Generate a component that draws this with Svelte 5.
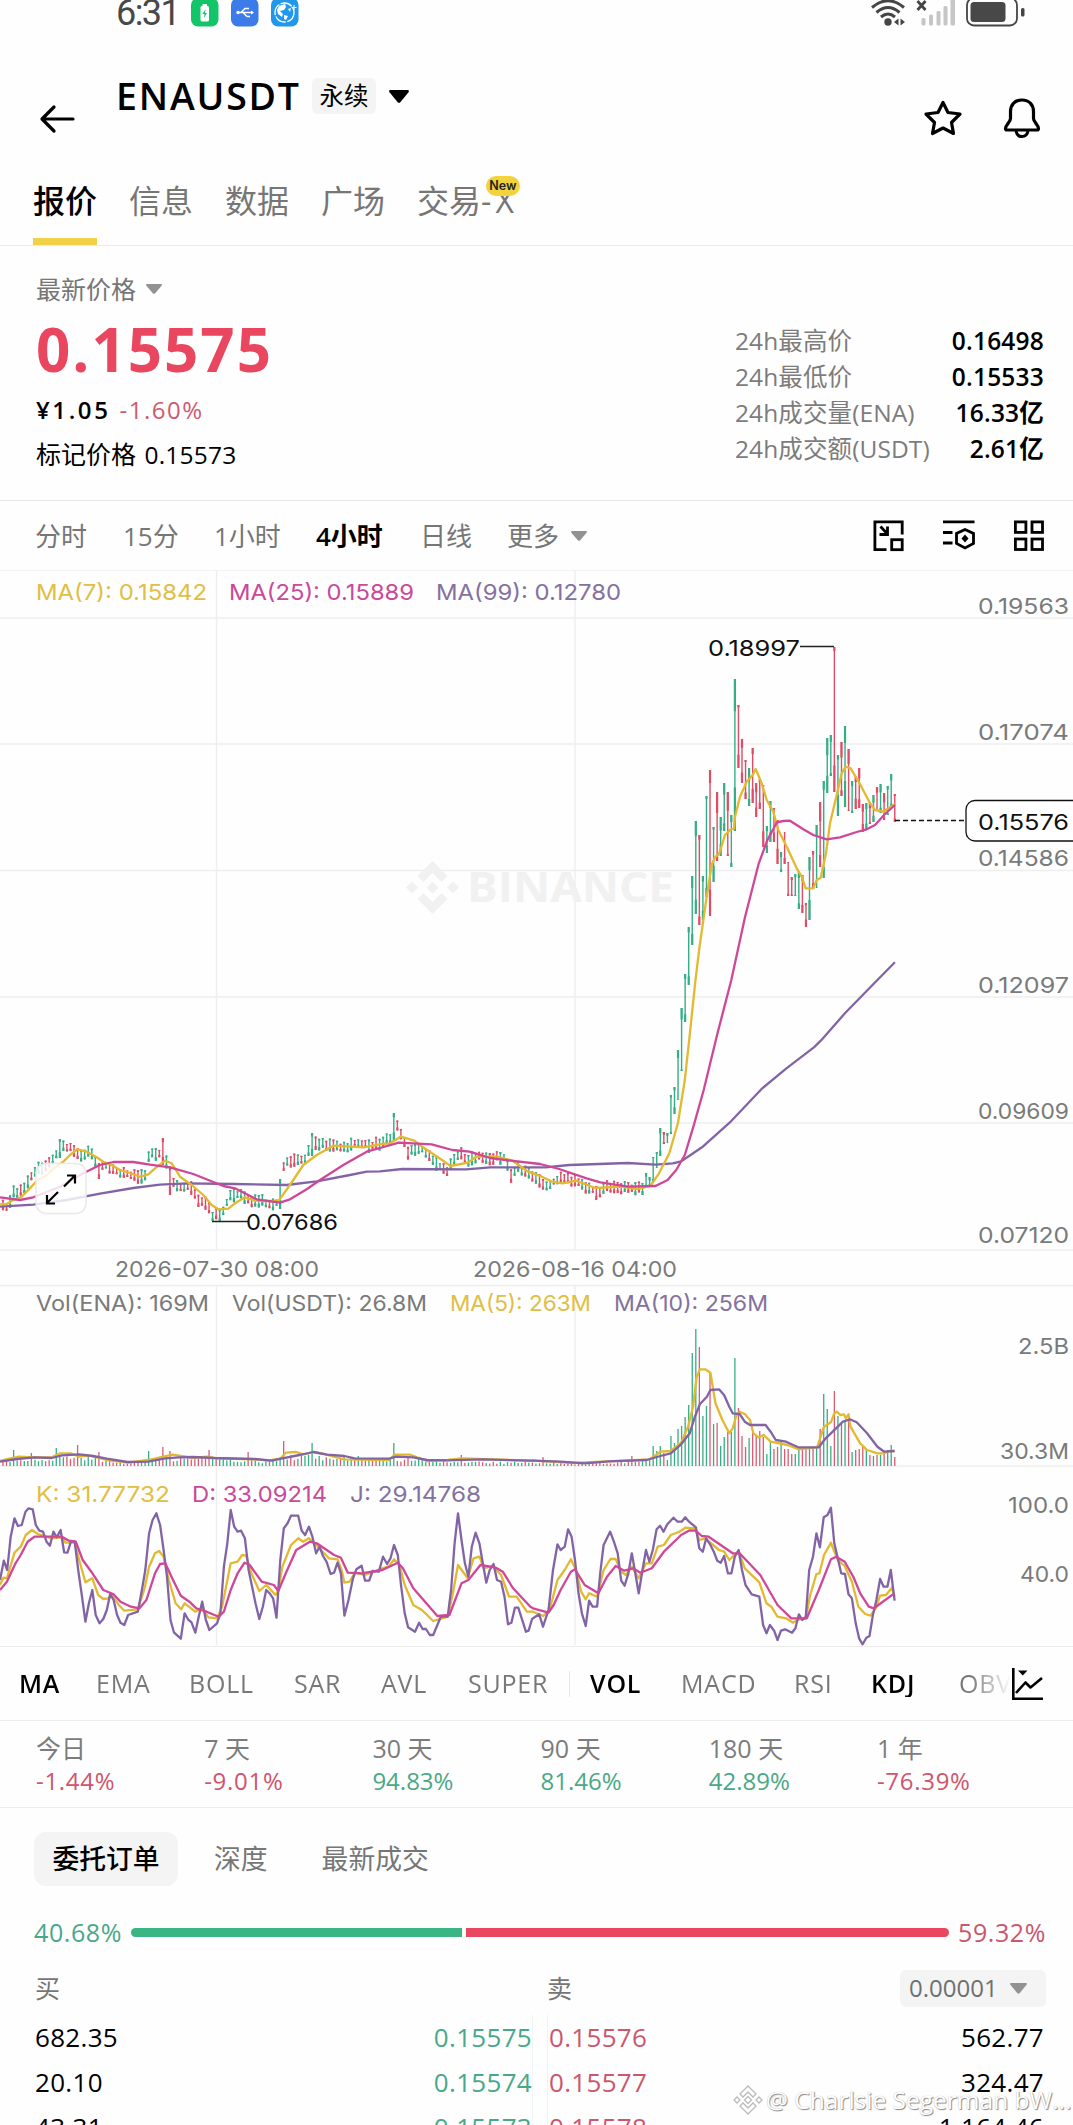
<script lang="ts">
    type Candle = { x: number; high: number; low: number; open: number; close: number; up: boolean };

    const STEP = 3.553;
    const FIRST_X = 688.7;
    const VOL_BASE = 1466;

    const tabs = ["报价", "信息", "数据", "广场"];

    const stats = [
        { label: "24h最高价", value: "0.16498" },
        { label: "24h最低价", value: "0.15533" },
        { label: "24h成交量(ENA)", value: "16.33亿" },
        { label: "24h成交额(USDT)", value: "2.61亿" },
    ];

    const periods = [
        { label: "分时", width: 88 },
        { label: "15分", width: 91 },
        { label: "1小时", width: 102 },
        { label: "4小时", width: 104, active: true },
        { label: "日线", width: 87 },
        { label: "更多", width: 64 },
    ];

    const indicators = [
        { label: "MA", width: 77, active: true },
        { label: "EMA", width: 93 },
        { label: "BOLL", width: 105 },
        { label: "SAR", width: 87 },
        { label: "AVL", width: 87 },
        { label: "SUPER", width: 101 },
        { label: "VOL", width: 91, active: true },
        { label: "MACD", width: 113 },
        { label: "RSI", width: 77 },
        { label: "KDJ", width: 88, active: true },
        { label: "OBV", width: 50 },
    ];

    const performance = [
        { label: "今日", value: "-1.44%" },
        { label: "7 天", value: "-9.01%" },
        { label: "30 天", value: "94.83%" },
        { label: "90 天", value: "81.46%" },
        { label: "180 天", value: "42.89%" },
        { label: "1 年", value: "-76.39%" },
    ];

    const book = [
        { bidQty: "682.35", bid: "0.15575", ask: "0.15576", askQty: "562.77" },
        { bidQty: "20.10", bid: "0.15574", ask: "0.15577", askQty: "324.47" },
        { bidQty: "43.31", bid: "0.15573", ask: "0.15578", askQty: "1,164.46" },
    ];
    const buyShare = 40.68;

    const gridRows = [618, 744, 870.5, 997, 1123, 1250];
    const gridCols = [216.5, 575];

    const axis = [
        { text: "0.19563", y: 614, w: 91 },
        { text: "0.17074", y: 740, w: 91 },
        { text: "0.14586", y: 866, w: 91 },
        { text: "0.12097", y: 993, w: 91 },
        { text: "0.09609", y: 1119, w: 91 },
        { text: "0.07120", y: 1243, w: 91 },
        { text: "2.5B", y: 1354, w: 51 },
        { text: "30.3M", y: 1459, w: 69 },
        { text: "100.0", y: 1513, w: 61 },
        { text: "40.0", y: 1582, w: 49 },
    ];

    const legend = [
        { text: "MA(7): 0.15842", x: 36, y: 600, w: 171, c: "yellow" },
        { text: "MA(25): 0.15889", x: 229, y: 600, w: 185, c: "pink" },
        { text: "MA(99): 0.12780", x: 436, y: 600, w: 185, c: "purple" },
        { text: "Vol(ENA): 169M", x: 36, y: 1311, w: 173, c: "gray" },
        { text: "Vol(USDT): 26.8M", x: 232, y: 1311, w: 195, c: "gray" },
        { text: "MA(5): 263M", x: 450, y: 1311, w: 141, c: "yellow" },
        { text: "MA(10): 256M", x: 614, y: 1311, w: 154, c: "purple" },
        { text: "K: 31.77732", x: 36, y: 1502, w: 134, c: "yellow" },
        { text: "D: 33.09214", x: 192, y: 1502, w: 135, c: "pink" },
        { text: "J: 29.14768", x: 350, y: 1502, w: 131, c: "purple" },
    ];

    // high, low and direction of the latest bars, oldest first
    const recent = `1183 1195 u,1173 1186 u,1177 1187 u,1157 1182 u,1152 1168 u,1128 1156 u,1132 1144 d,1133 1143 u,
        1095 1134 u,1087 1114 u,1050 1100 u,1008 1071 u,974 1022 u,927 985 u,876 945 u,821 914 u,835 925 d,876 920 u,
        796 897 u,770 916 d,827 882 u,792 861 d,817 856 u,783 831 u,792 856 d,815 867 u,679 831 u,705 768 d,739 783 d,
        760 799 d,768 806 u,748 803 d,783 817 d,779 809 d,785 847 d,826 853 u,801 842 u,808 842 d,820 864 d,852 872 u,
        832 864 d,862 896 d,877 896 d,874 896 u,872 909 u,875 913 d,903 927 d,857 920 u,851 889 d,825 888 u,802 867 d,
        781 878 u,738 793 u,735 776 u,647 792 d,755 816 u,742 796 d,726 807 u,749 811 d,781 813 u,776 809 d,768 808 d,
        804 832 d,803 830 u,803 824 d,795 822 u,787 811 d,784 813 u,793 820 d,786 815 u,774 807 u,794 822 d`
        .split(",")
        .map((row) => row.trim().split(" "));

    // midline of the quiet stretch before the rally
    const drift = [
        0, 1205, 8, 1208, 14, 1192, 22, 1191, 30, 1178, 37, 1170, 50, 1163, 60, 1150, 64, 1147, 72, 1148, 80, 1156,
        90, 1152, 100, 1167, 105, 1165, 115, 1171, 130, 1174, 140, 1178, 146, 1172, 149, 1154, 160, 1153, 166, 1160,
        171, 1180, 180, 1187, 190, 1186, 197, 1200, 205, 1203, 213, 1213, 218, 1216, 225, 1208, 229, 1196, 240, 1195,
        250, 1200, 262, 1201, 274, 1206, 279, 1200, 283, 1166, 290, 1161, 305, 1160, 312, 1144, 325, 1143, 335, 1147,
        345, 1147, 355, 1143, 370, 1146, 380, 1143, 392, 1138, 397, 1127, 404, 1140, 408, 1152, 420, 1147, 435, 1163,
        447, 1170, 454, 1158, 460, 1153, 468, 1162, 475, 1156, 490, 1158, 505, 1157, 511, 1176, 516, 1168, 530, 1174,
        547, 1186, 560, 1177, 580, 1183, 596, 1192, 610, 1186, 625, 1188, 645, 1189,
    ];

    const spikes: Record<number, [number, number, boolean]> = {
        163: [1138, 1165, false],
        170: [1166, 1195, false],
        394: [1113, 1141, true],
        213: [1212, 1221, true],
        280: [1179, 1209, true],
        60: [1139, 1158, true],
        312: [1133, 1156, true],
        99: [1163, 1179, false],
        596: [1186, 1200, false],
    };

    function noise(i: number) {
        const v = Math.sin(i * 127.1 + 11.7) * 43758.5453;
        return v - Math.floor(v);
    }

    function level(path: number[], x: number) {
        for (let i = 2; i < path.length; i += 2) {
            if (x <= path[i]) {
                const t = (x - path[i - 2]) / (path[i] - path[i - 2]);
                return path[i - 1] + t * (path[i + 1] - path[i - 1]);
            }
        }
        return path[path.length - 1];
    }

    function buildCandles(): Candle[] {
        const list: Candle[] = [];
        for (let n = -193; n < -13; n++) {
            const x = FIRST_X + n * STEP;
            const mid = level(drift, x);
            const slope = level(drift, x + 4) - level(drift, x - 4);
            const up = slope < -2 ? noise(n) < 0.8 : slope > 2 ? noise(n) < 0.25 : noise(n) < 0.5;
            let high = mid - 2.5 - noise(n + 500) * 5;
            let low = mid + 2.5 + noise(n + 900) * 5;
            let dir = up;
            for (const key in spikes) {
                if (Math.abs(Number(key) - x) < STEP / 2) [high, low, dir] = spikes[key];
            }
            const a = high + (low - high) * 0.15;
            const b = low - (low - high) * 0.3;
            list.push({ x, high, low, open: a, close: b, up: dir });
        }
        recent.forEach(([h, l, d], i) => {
            const high = Number(h);
            const low = Number(l);
            const n = i - 13;
            const top = high + (low - high) * noise(n + 40) * 0.35;
            const bottom = low - (low - high) * noise(n + 70) * 0.35;
            list.push({ x: FIRST_X + n * STEP, high, low, open: top, close: bottom, up: d === "u" });
        });
        return list;
    }

    const candles = buildCandles();

    const recentVolume = [
        20, 15, 20, 13, 6, 30, 23, 37, 40, 49, 61, 113, 137, 119, 50, 60, 94, 42, 43, 20, 29, 34, 34, 108, 58, 30, 19,
        28, 33, 30, 35, 29, 12, 24, 17, 19, 24, 17, 17, 12, 12, 16, 18, 17, 17, 18, 19, 37, 72, 57, 20, 75, 50, 43, 46,
        47, 14, 16, 17, 19, 17, 11, 10, 11, 11, 12, 16, 21, 9,
    ];
    const volumeSpikes: Record<number, number> = {
        14: 16, 32: 13, 57: 18, 78: 21, 99: 14, 149: 15, 163: 19, 170: 15, 209: 16, 249: 14,
        284: 25, 313: 23, 394: 23, 461: 11, 543: 9, 632: 10,
    };
    const volumeTrend = [0, 5, 60, 8, 90, 8, 130, 3, 160, 7, 220, 7, 260, 4, 300, 10, 330, 9, 420, 6, 450, 4, 560, 3, 590, 2, 620, 4, 650, 6];

    const volumes = candles.map((c, i) => {
        const late = i - (candles.length - recentVolume.length);
        let h = late >= 0 ? recentVolume[late] : level(volumeTrend, c.x) * (0.6 + noise(i + 33) * 0.7);
        if (late < 0) {
            for (const key in volumeSpikes) {
                if (Math.abs(Number(key) - c.x) < STEP / 2) h = volumeSpikes[key];
            }
        }
        return { x: c.x, h, up: c.up };
    });

    // Turns "x,y x,y" sampled on a fine grid into page units
    function trace(src: string, ox: number, oy: number, sx: number) {
        return src
            .trim()
            .split(/\s+/)
            .map((p) => {
                const [x, y] = p.split(",").map(Number);
                return `${(x / sx + ox).toFixed(1)},${(y / 3 + oy).toFixed(1)}`;
            })
            .join(" ");
    }

    const FINE = 2.9037;

    const ma7 = [
        trace("0,373 20,372 40,360 65,350 90,325 110,303 140,285 165,262 190,245 210,225 232,208 260,215 290,232 310,245 335,255 360,270 400,282 420,290 445,283 465,265 495,242 515,250 540,290 575,315 610,345 635,375 655,388 685,386 705,370 735,352 765,362 800,363 835,363 845,350 880,300 910,255 950,225 1000,197 1050,200 1090,202 1130,195", 0, 1080, 3),
        trace("0,972 30,970 60,950 100,962 125,982 180,1020 205,1038 255,1028 280,1010 340,1010 385,1022 430,1055 470,1070 500,1085 530,1090 570,1082 625,1104 700,1100 750,1107 785,1098 810,1060 840,1000 865,910 885,780 900,640 915,490", 380, 820, FINE),
        trace("178,985 200,830 215,735 225,712 238,700 255,645 270,630 282,625 285,590 300,530 320,485 338,465 347,447 365,490 380,540 400,575 415,630 440,680 470,745 485,770 497,805 520,805 530,780 542,773 558,700 570,610 590,525 605,460 617,440 632,445 660,492 690,550 705,570 730,575 750,562 765,552", 640, 620, 3),
    ].join(" ");

    const ma25 = [
        trace("0,352 60,360 100,352 180,320 250,280 300,255 340,246 400,246 450,254 510,262 580,282 640,306 670,318 705,325 770,358 840,368 870,358 920,328 960,300 1030,255 1100,215", 0, 1080, 3),
        trace("0,984 55,968 150,973 210,990 260,995 320,1014 380,1022 465,1032 520,1047 600,1075 640,1087 720,1100 800,1098 835,1080 860,1050 885,1005 910,920 940,810 980,640 1020,480 1060,290 1100,130 1125,60 1150,12", 380, 820, FINE),
        trace("410,607 430,603 450,602 490,628 520,645 560,658 600,652 650,636 680,628 705,615 735,582 765,555", 640, 620, 3),
    ].join(" ");

    const ma99 = [
        trace("0,380 100,374 200,360 300,341 400,324 480,314 560,310 700,312 860,315 950,304 1050,285 1100,275", 0, 1080, 3),
        trace("0,1054 65,1047 250,1048 320,1042 480,1042 550,1035 720,1029 800,1034 850,1030 875,1024 935,982 1015,908 1110,805 1180,745 1260,682 1280,662 1350,580 1430,495 1495,427", 380, 820, FINE),
    ].join(" ");

    const vol5 = [
        trace("0,603 30,595 55,590 100,592 150,592 175,580 205,580 230,590 260,587 310,600 370,608 430,600 500,584 540,590 560,594 600,590 640,596 740,598 780,602 815,595 830,578 860,576 880,583 910,576 940,582 1000,598 1130,600 1145,584 1190,584 1240,603 1300,600 1340,595 1540,602", 0, 1260, FINE),
        trace("0,602 120,609 200,605 340,598 370,575 400,573 430,548 450,500 465,440 475,350 485,328 500,328 515,338 530,430 550,480 570,520 580,505 590,468 600,455 615,462 630,480 640,520 655,532 670,525 690,545 740,555 770,568 825,562 845,500 865,487 875,460 882,455 892,465 903,463 908,475 916,463 922,500 950,550 970,570 1000,580 1020,580 1035,573 1050,573", 533, 1260, FINE),
    ].join(" ");

    const vol10 = [
        trace("0,605 50,597 100,592 150,594 180,586 230,583 270,588 310,596 370,606 430,605 480,595 520,592 560,591 620,594 740,597 790,602 820,595 870,585 910,576 950,584 1000,588 1030,595 1130,596 1150,590 1200,592 1240,600 1300,601 1400,598 1540,602", 0, 1260, FINE),
        trace("0,602 80,605 150,610 220,604 330,600 370,588 400,580 430,553 455,520 470,470 485,432 505,410 515,390 540,388 555,405 570,440 580,460 600,462 615,485 630,495 675,495 690,515 705,540 735,545 770,562 830,562 850,535 865,520 900,485 920,478 940,487 970,520 1000,560 1020,575 1050,573", 533, 1260, FINE),
    ].join(" ");

    const lineJ = [
        trace("0,960 11,902 21,930 31,830 42,775 52,798 63,795 74,755 83,745 95,748 104,795 114,812 125,815 135,845 145,857 155,815 165,832 176,810 186,877 196,878 206,845 217,845 227,930 238,1010 248,1085 258,1030 268,990 278,1065 289,1090 300,1077 310,1050 320,1002 330,1020 340,1065 350,1088 361,1095 372,1065 400,1055 412,990 422,930 433,820 443,780 454,760 465,795 475,870 485,950 495,1080 505,1117 525,1136 536,1060 546,1078 556,1087 567,1118 577,1070 587,1025 598,1080 608,1110 630,1090 640,1060 650,920 660,850 670,750 680,800 690,815 700,812 711,835 722,930 732,980 742,1030 753,1077 763,1040 773,990 783,1000 793,1015 803,1073 814,900 824,805 835,790 845,767 866,767 876,812 886,825 897,800 907,830 918,880 928,860 938,888 948,905 960,942 970,938 980,908 990,940 1000,1067 1012,1020 1025,955 1035,928 1050,917 1060,962 1072,962 1082,933 1100,935 1112,890 1124,912 1134,895 1144,855 1155,885 1165,980 1175,1060 1185,1102 1205,1115 1217,1088 1227,1107 1237,1107 1248,1125 1258,1125 1270,1095 1280,1070 1300,1070 1310,990 1320,850 1330,760 1340,840 1350,910 1360,950 1370,860 1381,818 1392,850 1402,910 1412,968 1422,930 1433,912 1443,960 1455,965 1465,1010 1475,1093 1485,1088 1495,1043 1505,1043 1515,1075 1527,1115 1535,1112 1545,1077", 0, 1260, FINE),
        trace("0,1075 18,1063 29,1100 45,1050 58,930 71,853 80,870 92,860 102,808 112,830 122,900 132,1000 142,1060 153,1098 163,1022 173,1040 186,1040 195,940 205,855 224,815 235,845 246,880 256,962 266,977 277,940 287,880 297,940 307,1000 318,930 328,870 338,905 348,870 359,808 369,797 379,815 390,793 408,773 420,785 432,785 442,772 453,785 473,802 483,865 493,875 503,835 515,855 525,875 535,902 545,908 555,888 566,940 576,940 586,890 597,870 607,930 617,975 635,1003 657,1010 668,1095 678,1120 688,1095 700,1112 710,1140 720,1112 732,1108 752,1118 762,1105 772,1063 782,1080 792,1070 802,930 813,890 823,820 833,862 844,772 855,765 865,743 875,850 885,895 895,940 906,942 916,1003 926,1015 937,1090 947,1135 957,1153 968,1133 977,1128 987,1065 997,1020 1008,957 1018,980 1029,980 1039,930 1050,1022", 533, 1260, FINE),
    ].join(" ");

    const lineK = [
        trace("0,975 10,953 20,955 42,878 60,860 75,825 93,810 110,822 150,835 180,832 190,848 217,848 230,900 248,967 268,955 285,1005 300,1017 315,1015 325,1003 345,1035 361,1052 400,1048 420,985 433,920 450,880 462,873 475,890 490,960 510,1030 526,1048 536,1030 567,1055 587,1045 605,1072 630,1075 645,1040 670,910 690,905 703,885 715,887 730,940 753,993 773,975 800,1005 808,990 820,920 845,855 866,835 880,845 897,835 918,855 955,895 980,898 992,930 1000,968 1015,965 1030,938 1060,945 1110,925 1130,918 1144,898 1160,915 1175,975 1200,1035 1225,1050 1258,1083 1300,1070 1315,1000 1330,915 1358,955 1375,895 1392,890 1405,925 1430,918 1455,945 1478,1010 1500,1010 1530,1055", 0, 1260, FINE),
        trace("0,1055 30,1068 48,1050 71,960 92,930 110,898 125,930 140,995 153,1018 163,1000 186,1010 205,930 225,897 240,897 256,935 270,945 287,920 307,955 328,910 345,910 362,860 380,855 400,825 425,815 442,803 470,805 483,840 500,835 540,870 555,875 570,900 580,890 597,873 615,925 657,967 678,1030 692,1040 710,1070 735,1075 755,1088 772,1078 792,1075 805,1005 823,942 832,940 845,885 865,848 885,900 905,918 926,965 945,1040 965,1062 980,1067 995,1045 1008,1007 1025,1005 1042,983 1050,1010", 533, 1260, FINE),
    ].join(" ");

    const lineD = [
        trace("0,990 20,965 45,910 60,885 80,845 100,830 180,830 200,842 220,845 240,900 265,935 300,990 330,1003 350,1025 380,1040 405,1045 425,1020 450,940 465,912 480,910 500,955 525,1007 550,1025 570,1045 600,1055 635,1070 650,1055 670,990 690,940 710,908 725,915 760,965 795,975 808,993 830,940 860,870 900,845 920,850 970,885 990,893 1010,938 1050,940 1110,930 1155,908 1170,925 1200,985 1270,1068 1305,1065 1340,970 1360,960 1395,915 1440,923 1460,935 1490,985 1540,1040", 0, 1260, FINE),
        trace("0,1045 45,1058 60,1035 80,990 110,935 122,928 150,975 190,1000 215,950 240,918 265,932 290,925 312,938 345,925 380,875 430,825 455,811 472,812 490,828 510,830 545,855 580,880 600,880 660,945 710,1035 750,1075 795,1075 830,990 865,898 880,890 905,905 930,950 950,1000 975,1040 990,1045 1010,1030 1045,1003 1050,1003", 533, 1260, FINE),
    ].join(" ");
</script>

{#snippet caret(w: number, h: number, color: string)}
    <svg class="caret" width={w} height={h} viewBox="0 0 20 12" preserveAspectRatio="none">
        <path d="M1 0h18q1.5.5.5 2L11.5 11q-1.5 1.6-3 0L.5 2Q-.5.5 1 0z" fill={color} />
    </svg>
{/snippet}

<main class="page">
    <div class="status">
        <span class="clock">6:31</span>
        <svg class="apps" width="108" height="27" viewBox="0 0 108 27">
            <rect x="0" y="-2" width="27.5" height="28.5" rx="7" fill="#12c568" />
            <rect x="9.5" y="6" width="8.5" height="15.5" rx="1.5" fill="#fff" />
            <rect x="11.5" y="4" width="4.5" height="2" fill="#fff" />
            <path d="M14.5 9l-3 5h2l-.5 4 3-5h-2z" fill="#12c568" />
            <rect x="40" y="-2" width="27.5" height="28.5" rx="7" fill="#3c7ce9" />
            <g stroke="#fff" stroke-width="1.4" fill="none">
                <path d="M47 12.500h15M50 12.500l4-4h4M52 12.500l4 4h3" />
                <circle cx="47" cy="12.500" r="1" fill="#fff" />
                <path d="M60 10.500l3 2-3 2z" fill="#fff" stroke="none" />
            </g>
            <rect x="80" y="-2" width="27.500" height="28.500" rx="7" fill="#2198ec" />
            <circle cx="93.500" cy="12.500" r="9.500" fill="none" stroke="#fff" stroke-width="1.3" stroke-dasharray="12 1.500" />
            <path d="M88 6l6-2 1 3-2 3-4 1 3 3-1 3-4-3-1-4zM93 15l4 1-2 4-2-1zM97 9l2 3 1-4z" fill="#fff" />
            <path d="M103 5v5M100.500 7.500h5" stroke="#fff" />
        </svg>
        <svg class="signals" width="156" height="28" viewBox="0 0 156 28">
            <g fill="none" stroke="#454545" stroke-width="3">
                <path d="M2 7.500Q18-6 34 7.500M6.500 12.500Q18 2.500 29.500 12.500M11 17Q18 11 25 17" />
            </g>
            <circle cx="18" cy="22" r="3.700" fill="#454545" />
            <path d="M28.500 18.500v7l-4.500-3.500zM30.500 18.500v7l4.500-3.500z" fill="#454545" />
            <path d="M47.500 1l8 9M55.500 1l-8 9" stroke="#454545" stroke-width="2.800" />
            <g fill="#c6c6c6">
                <rect x="51.500" y="18" width="4" height="7.500" rx="1.500" />
                <rect x="59" y="14.500" width="4" height="11" rx="1.500" />
                <rect x="66.500" y="11" width="4" height="14.500" rx="1.500" />
                <rect x="73.500" y="6" width="4" height="19.500" rx="1.500" />
                <rect x="80.500" y="-2" width="4.500" height="27.500" rx="1.500" />
            </g>
            <rect x="97" y="-2" width="50" height="27.500" rx="7" fill="none" stroke="#454545" stroke-width="1.800" />
            <rect x="100.500" y="2" width="35" height="20" rx="3.500" fill="#484848" />
            <rect x="151" y="8" width="3.500" height="8.500" rx="1.500" fill="#454545" />
        </svg>
    </div>

    <header class="header">
        <svg class="back" width="36" height="30" viewBox="0 0 36 30">
            <path d="M15 3L3 15l12 12M3.500 15H34" fill="none" stroke="#000" stroke-width="3.200" stroke-linecap="round" stroke-linejoin="round" />
        </svg>
        <div class="symbol">
            <h1>ENAUSDT</h1>
            <span class="tag">永续</span>
            {@render caret(20, 13, "#000")}
        </div>
        <svg class="star" width="40" height="40" viewBox="0 0 40 40">
            <path d="M20 4.500L25 14.500L37 16L28.500 24.500L30.500 35.500L20 30L9.500 35.500L11.500 24.500L3 16L15 14.500Z" fill="none" stroke="#000" stroke-width="3.200" stroke-linejoin="round" />
        </svg>
        <svg class="bell" width="40" height="42" viewBox="0 0 40 42">
            <path d="M20 3C12.500 3 8.500 8 8.500 14.500V21.500C8.500 25 3.500 28 3.500 31.500Q3.500 33 5 33H35Q36.500 33 36.500 31.500C36.500 28 31.500 25 31.500 21.500V14.500C31.500 8 27.500 3 20 3Z" fill="none" stroke="#000" stroke-width="3.200" />
            <path d="M14 34Q15 39.500 20 39.500T26 34" fill="none" stroke="#000" stroke-width="3" />
        </svg>
    </header>

    <nav class="tabs">
        {#each tabs as tab, i}
            <span class="tab" class:active={i === 0}>{tab}</span>
        {/each}
        <span class="tab trade">交易<span class="suffix">-X</span><em class="badge">New</em></span>
    </nav>

    <section class="quote">
        <div class="price-col">
            <div class="muted last">最新价格 {@render caret(16, 10, "#929292")}</div>
            <div class="price">0.15575</div>
            <div class="change"><b>¥1.05</b><span>-1.60%</span></div>
            <div class="mark">标记价格 <span>0.15573</span></div>
        </div>
        <dl class="stats">
            {#each stats as s}
                <div>
                    <dt>{s.label}</dt>
                    <dd>{s.value}</dd>
                </div>
            {/each}
        </dl>
    </section>

    <nav class="periods">
        {#each periods as p}
            <span class:active={p.active} style="width: {p.width}px">{p.label}</span>
        {/each}
        {@render caret(16, 10, "#929292")}
        <svg class="tools" width="172" height="32" viewBox="0 0 172 32" fill="none" stroke="#000" stroke-width="2.800">
            <path d="M13.500 29.700H1.900V1.900H29.200V14.500" />
            <path d="M7.500 6.500L14 13.500M14.500 6.500V14.500H6.500" />
            <rect x="18.700" y="19.700" width="10.500" height="10" />
            <path d="M70 1.900H101.500M70 12.500H79.500M70 23H79.500" />
            <path d="M92 9.500L100.500 13.500V23.500L92 28L83.500 23.500V13.500Z" />
            <path d="M92 14.500L95.500 18.500L92 22.500L88.500 18.500Z" fill="#000" stroke="none" />
            <rect x="142.400" y="1.900" width="10.500" height="10.500" />
            <rect x="159" y="1.900" width="10.500" height="10.500" />
            <rect x="142.400" y="19" width="10.500" height="10.500" />
            <rect x="159" y="19" width="10.500" height="10.500" />
        </svg>
    </nav>

    <svg class="chart" width="1073" height="1076" viewBox="0 570 1073 1076">
        <g class="grid">
            {#each gridRows as y}
                <path d="M0 {y}H1073" />
            {/each}
            {#each gridCols as x}
                <path d="M{x} 570V1250M{x} 1285V1645" />
            {/each}
            <path d="M0 1285.500H1073M0 1466H1073" />
        </g>

        <g class="brand" fill="#f1f1f1">
            <path d="M432.500 861l15 15-6 6-9-9-9 9-6-6zM432.500 914l15-15-6-6-9 9-9-9-6 6zM412 881.500l6 6-6 6-6-6zM453 881.500l6 6-6 6-6-6zM432.500 881.500l6 6-6 6-6-6z" />
            <text x="467" y="902" textLength="207" lengthAdjust="spacingAndGlyphs">BINANCE</text>
        </g>

        {#each candles as c}
            <g stroke={c.up ? "#35ae85" : "#df4c66"}>
                <path d="M{c.x} {c.high}V{c.low}" stroke-width="1.400" />
                <path d="M{c.x} {c.high}V{c.open}M{c.x} {c.close}V{c.low}" stroke-width="2.200" />
            </g>
        {/each}

        <g class="lines">
            <polyline class="s-purple" points={ma99} />
            <polyline class="s-yellow" points={ma7} />
            <polyline class="s-pink" points={ma25} />
        </g>

        {#each volumes as v}
            <path d="M{v.x} {VOL_BASE}v{-v.h}" stroke={v.up ? "#35ae85" : "#d95c72"} stroke-width="1.300" />
        {/each}
        <g class="lines">
            <polyline class="s-yellow" points={vol5} />
            <polyline class="s-purple" points={vol10} />
            <polyline class="s-yellow" points={lineK} />
            <polyline class="s-purple" points={lineJ} />
            <polyline class="s-pink" points={lineD} />
        </g>

        <g class="labels">
            {#each axis as a}
                <text x={1069 - a.w} y={a.y} textLength={a.w} lengthAdjust="spacingAndGlyphs">{a.text}</text>
            {/each}
            {#each legend as l}
                <text class={l.c} x={l.x} y={l.y} textLength={l.w} lengthAdjust="spacingAndGlyphs">{l.text}</text>
            {/each}
            <text x="115" y="1277" textLength="204" lengthAdjust="spacingAndGlyphs">2026-07-30 08:00</text>
            <text x="473" y="1277" textLength="204" lengthAdjust="spacingAndGlyphs">2026-08-16 04:00</text>
            <text class="ink" x="708" y="656" textLength="92" lengthAdjust="spacingAndGlyphs">0.18997</text>
            <text class="ink" x="246" y="1230" textLength="92" lengthAdjust="spacingAndGlyphs">0.07686</text>
        </g>
        <path d="M800 646.500H834M212 1221.500H248" stroke="#222" stroke-width="1.300" />

        <path d="M895 820.500H965" stroke="#111" stroke-width="1.300" stroke-dasharray="5 3" />
        <rect x="966" y="800.500" width="130" height="40.500" rx="9" fill="#fff" stroke="#111" stroke-width="1.300" />
        <text class="now" x="978" y="830" textLength="91" lengthAdjust="spacingAndGlyphs">0.15576</text>

        <rect x="36" y="1163.500" width="50" height="50" rx="10" fill="#fff" fill-opacity=".82" stroke="#ebe8ea" stroke-width="1.500" />
        <path d="M64 1186.500L74.500 1176M67 1175.500H75V1183.500M58 1192L47.500 1202.500M47 1195V1203.500H55" fill="none" stroke="#000" stroke-width="2.200" />
    </svg>

    <nav class="indicators">
        <div class="strip">
            {#each indicators as ind}
                <span class:active={ind.active} style="width: {ind.width}px">{ind.label}</span>
                {#if ind.label === "SUPER"}<i></i>{/if}
            {/each}
        </div>
        <svg width="34" height="34" viewBox="0 0 34 34" fill="none" stroke="#000" stroke-width="2.600">
            <path d="M2.300 1V31.700H32" />
            <path d="M5 26L14.500 15.500L19.500 20.500L31 11" stroke-linejoin="round" />
            <path d="M7 3.500H16.500L11.800 8.500Z" fill="#000" stroke="none" />
        </svg>
    </nav>

    <section class="performance">
        {#each performance as p}
            <div>
                <span>{p.label}</span>
                <strong class:down={p.value.startsWith("-")}>{p.value}</strong>
            </div>
        {/each}
    </section>

    <nav class="book-tabs">
        <span class="active">委托订单</span>
        <span>深度</span>
        <span>最新成交</span>
    </nav>

    <div class="ratio">
        <span class="green">{buyShare}%</span>
        <div class="bar">
            <i class="buy" style="flex-grow: {buyShare}"></i>
            <i class="sell" style="flex-grow: {100 - buyShare}"></i>
        </div>
        <span class="red">{(100 - buyShare).toFixed(2)}%</span>
    </div>

    <div class="book-head">
        <span>买</span>
        <span class="ask-title">卖</span>
        <button>0.00001 {@render caret(17, 11, "#929292")}</button>
    </div>

    <section class="book">
        {#each book as row}
            <div class="row">
                <span class="bid-qty">{row.bidQty}</span>
                <span class="green bid">{row.bid}</span>
                <span class="red ask">{row.ask}</span>
                <span class="qty">{row.askQty}</span>
            </div>
        {/each}
    </section>

    <div class="credit">
        <svg width="30" height="30" viewBox="0 0 30 30" fill="none" stroke="#bbb" stroke-width="1.300">
            <path d="M15 1l8 8-3 3-5-5-5 5-3-3zM15 29l8-8-3-3-5 5-5-5-3 3zM4 12l3 3-3 3-3-3zM26 12l3 3-3 3-3-3zM15 11.500l3.500 3.500-3.500 3.500-3.500-3.500z" fill="#fff" />
        </svg>
        <span>@ Charlsie Segerman bW...</span>
    </div>
</main>

<style>
    :global(body) {
        background: #fefefe;
    }

    .page {
        position: relative;
        width: 1073px;
        height: 2125px;
        overflow: hidden;
        background: #fefefe;
        color: #000;
        font-family: "Open Sans", "Noto Sans CJK SC", sans-serif;
        font-size: 25px;
        line-height: 1;
        white-space: nowrap;
    }

    .caret {
        display: block;
        flex: none;
    }

    .status {
        display: flex;
        align-items: flex-start;
        height: 60px;
        padding-left: 116px;
    }

    .clock {
        width: 75px;
        margin-top: -5px;
        font: 400 36px/36px Roboto, sans-serif;
        letter-spacing: -1.6px;
        color: #484848;
    }

    .signals {
        margin-left: 571px;
    }

    .header {
        display: flex;
        align-items: flex-start;
        height: 110px;
        padding-left: 39px;
    }

    .back {
        margin-top: 44px;
    }

    .symbol {
        display: flex;
        align-items: center;
        width: 806px;
        height: 36px;
        margin: 18px 0 0 41px;
    }

    h1 {
        width: 196px;
        margin: 0;
        font-size: 37.5px;
        font-weight: 600;
        letter-spacing: 1.8px;
    }

    .tag {
        display: flex;
        align-items: center;
        justify-content: center;
        width: 64px;
        height: 36px;
        margin-right: 13px;
        border-radius: 6px;
        background: #f4f4f4;
        font-size: 24.5px;
    }

    .star {
        margin-top: 38px;
        margin-left: 1px;
    }

    .bell {
        margin: 37px 0 0 39px;
    }

    .tabs {
        display: flex;
        gap: 32px;
        height: 75px;
        padding-left: 33px;
        border-bottom: 1.5px solid #ebebeb;
    }

    .tab {
        position: relative;
        box-sizing: border-box;
        height: 75px;
        padding-top: 15px;
        font-size: 32px;
        color: #767676;
    }

    .tab.active {
        border-bottom: 7px solid #f0d147;
        color: #000;
        font-weight: 500;
    }

    .suffix {
        letter-spacing: 4px;
    }

    .badge {
        position: absolute;
        top: 6px;
        right: -2px;
        width: 34px;
        height: 20px;
        border-radius: 10px;
        background: #f3d33c;
        color: #222;
        font: 600 12.500px/20px Inter, sans-serif;
        text-align: center;
    }

    .quote {
        display: flex;
        justify-content: space-between;
        box-sizing: border-box;
        height: 255px;
        padding: 29px 29px 0 36px;
        border-bottom: 1.5px solid #e6e6e6;
    }

    .last {
        display: flex;
        align-items: center;
        gap: 10px;
        height: 28px;
        color: #767676;
    }

    .price {
        margin-top: 16px;
        font-size: 60px;
        font-weight: 700;
        letter-spacing: 2px;
        color: #e9475f;
    }

    .change {
        display: flex;
        gap: 9px;
        margin-top: 19px;
        font-size: 24px;
        letter-spacing: 1.2px;
    }

    .change b {
        font-weight: 600;
        letter-spacing: 2.6px;
    }

    .change span {
        color: #cf5a6e;
        font-weight: 500;
        letter-spacing: 1.5px;
    }

    .mark {
        margin-top: 20px;
    }

    .mark span {
        margin-left: 2px;
        font-size: 24.500px;
        letter-spacing: 0.2px;
    }

    .stats {
        width: 309px;
        margin: 48px 0 0;
        font-size: 24.500px;
    }

    .stats div {
        display: flex;
        align-items: center;
        justify-content: space-between;
        height: 36px;
    }

    .stats dt {
        color: #7c7c7c;
        letter-spacing: 0.1px;
    }

    .stats dd {
        margin: 0;
        font-weight: 600;
        letter-spacing: 0.2px;
    }

    .periods {
        display: flex;
        align-items: center;
        height: 69px;
        padding-left: 35px;
        border-bottom: 1.5px solid #f3f3f3;
        color: #767676;
        font-size: 26px;
    }

    .periods .active {
        color: #000;
        font-weight: 600;
    }

    .tools {
        margin-left: 286px;
    }

    .chart {
        display: block;
        border-bottom: 1.5px solid #ececec;
        margin-top: -1px;
    }

    .grid {
        stroke: #eeeeee;
        stroke-width: 1.4;
    }

    .brand text {
        font-family: "Open Sans", sans-serif;
        font-size: 41px;
        font-weight: 700;
    }

    .lines {
        fill: none;
        stroke-width: 2.3;
        stroke-linejoin: round;
    }

    .s-yellow {
        stroke: #e2b92f;
    }

    .s-pink {
        stroke: #cf4799;
    }

    .s-purple {
        stroke: #8264a6;
    }

    .labels,
    .now {
        font-family: Inter, sans-serif;
        font-size: 22px;
        fill: #7a7a7a;
    }

    .labels .yellow {
        fill: #dfbf45;
    }

    .labels .pink {
        fill: #c9499a;
    }

    .labels .purple {
        fill: #84719f;
    }

    .labels .ink,
    .now {
        fill: #111;
    }

    .indicators {
        display: flex;
        align-items: center;
        height: 73px;
        border-bottom: 1.5px solid #ececec;
        color: #787878;
    }

    .strip {
        display: flex;
        align-items: center;
        width: 992px;
        padding-left: 19px;
        overflow: hidden;
        letter-spacing: 0.8px;
        mask-image: linear-gradient(to right, #000 970px, transparent 1011px);
    }

    .strip span {
        flex: none;
    }

    .strip i {
        flex: none;
        width: 1px;
        height: 26px;
        margin-right: 20px;
        background: #e6e6e6;
    }

    .strip .active {
        color: #000;
        font-weight: 600;
    }

    .performance {
        display: grid;
        grid-template-columns: repeat(6, 168.200px);
        align-content: center;
        height: 86px;
        padding-left: 36px;
        border-bottom: 1.5px solid #ececec;
    }

    .performance div {
        display: flex;
        flex-direction: column;
        gap: 8px;
    }

    .performance span {
        color: #7c7c7c;
    }

    .performance strong {
        font-size: 24px;
        font-weight: 400;
        color: #4aa887;
    }

    .performance .down {
        color: #cf546c;
        letter-spacing: 0.7px;
    }

    .book-tabs {
        display: flex;
        align-items: center;
        height: 54px;
        margin-top: 24px;
        padding-left: 34px;
        color: #767676;
        font-size: 26.800px;
    }

    .book-tabs span {
        margin-right: 54px;
    }

    .book-tabs .active {
        display: flex;
        align-items: center;
        justify-content: center;
        width: 144px;
        height: 54px;
        margin-right: 36px;
        border-radius: 12px;
        background: #f4f4f4;
        color: #000;
        font-weight: 500;
    }

    .ratio {
        display: flex;
        align-items: center;
        height: 40px;
        margin-top: 26px;
        padding: 0 27px 0 34px;
        letter-spacing: 0.6px;
    }

    .bar {
        display: flex;
        flex: 1;
        gap: 4px;
        height: 9px;
        margin: 0 9px;
    }

    .bar i {
        flex-basis: 0;
    }

    .buy {
        border-radius: 5px 0 0 5px;
        background: #3ab584;
    }

    .sell {
        border-radius: 0 5px 5px 0;
        background: #e9475f;
    }

    .green {
        color: #47a987;
    }

    .red {
        color: #cb566d;
    }

    .book-head {
        display: flex;
        align-items: center;
        height: 36px;
        margin-top: 18px;
        padding: 0 27px 0 35px;
        color: #767676;
    }

    .ask-title {
        margin-left: 487px;
    }

    .book-head button {
        display: flex;
        align-items: center;
        justify-content: space-between;
        width: 146px;
        height: 37px;
        margin-left: auto;
        padding: 0 19px 0 9px;
        border: 0;
        border-radius: 6px;
        background: #f4f4f4;
        color: #6f6f6f;
        font: 500 24px/1 "Open Sans", sans-serif;
    }

    .book {
        margin-top: 9px;
        font-size: 26px;
        letter-spacing: 0.3px;
    }

    .row {
        display: flex;
        height: 45px;
        padding: 0 29px 0 35px;
        line-height: 45px;
    }

    .bid-qty {
        width: 300px;
    }

    .bid {
        margin-left: auto;
        width: 100px;
        border-right: 1px solid #eef6f3;
        text-align: right;
    }

    .ask {
        width: 200px;
        margin-left: 14px;
        border-left: 1px solid #faeef0;
        padding-left: 1px;
    }

    .qty {
        width: 295px;
        text-align: right;
    }

    .credit {
        position: absolute;
        left: 733px;
        top: 2083px;
        display: flex;
        align-items: center;
        gap: 3px;
        height: 34px;
        color: #fff;
        font-size: 24.500px;
        text-shadow: 1px 1px 1px #888, 0 0 1px #aaa;
    }
</style>
